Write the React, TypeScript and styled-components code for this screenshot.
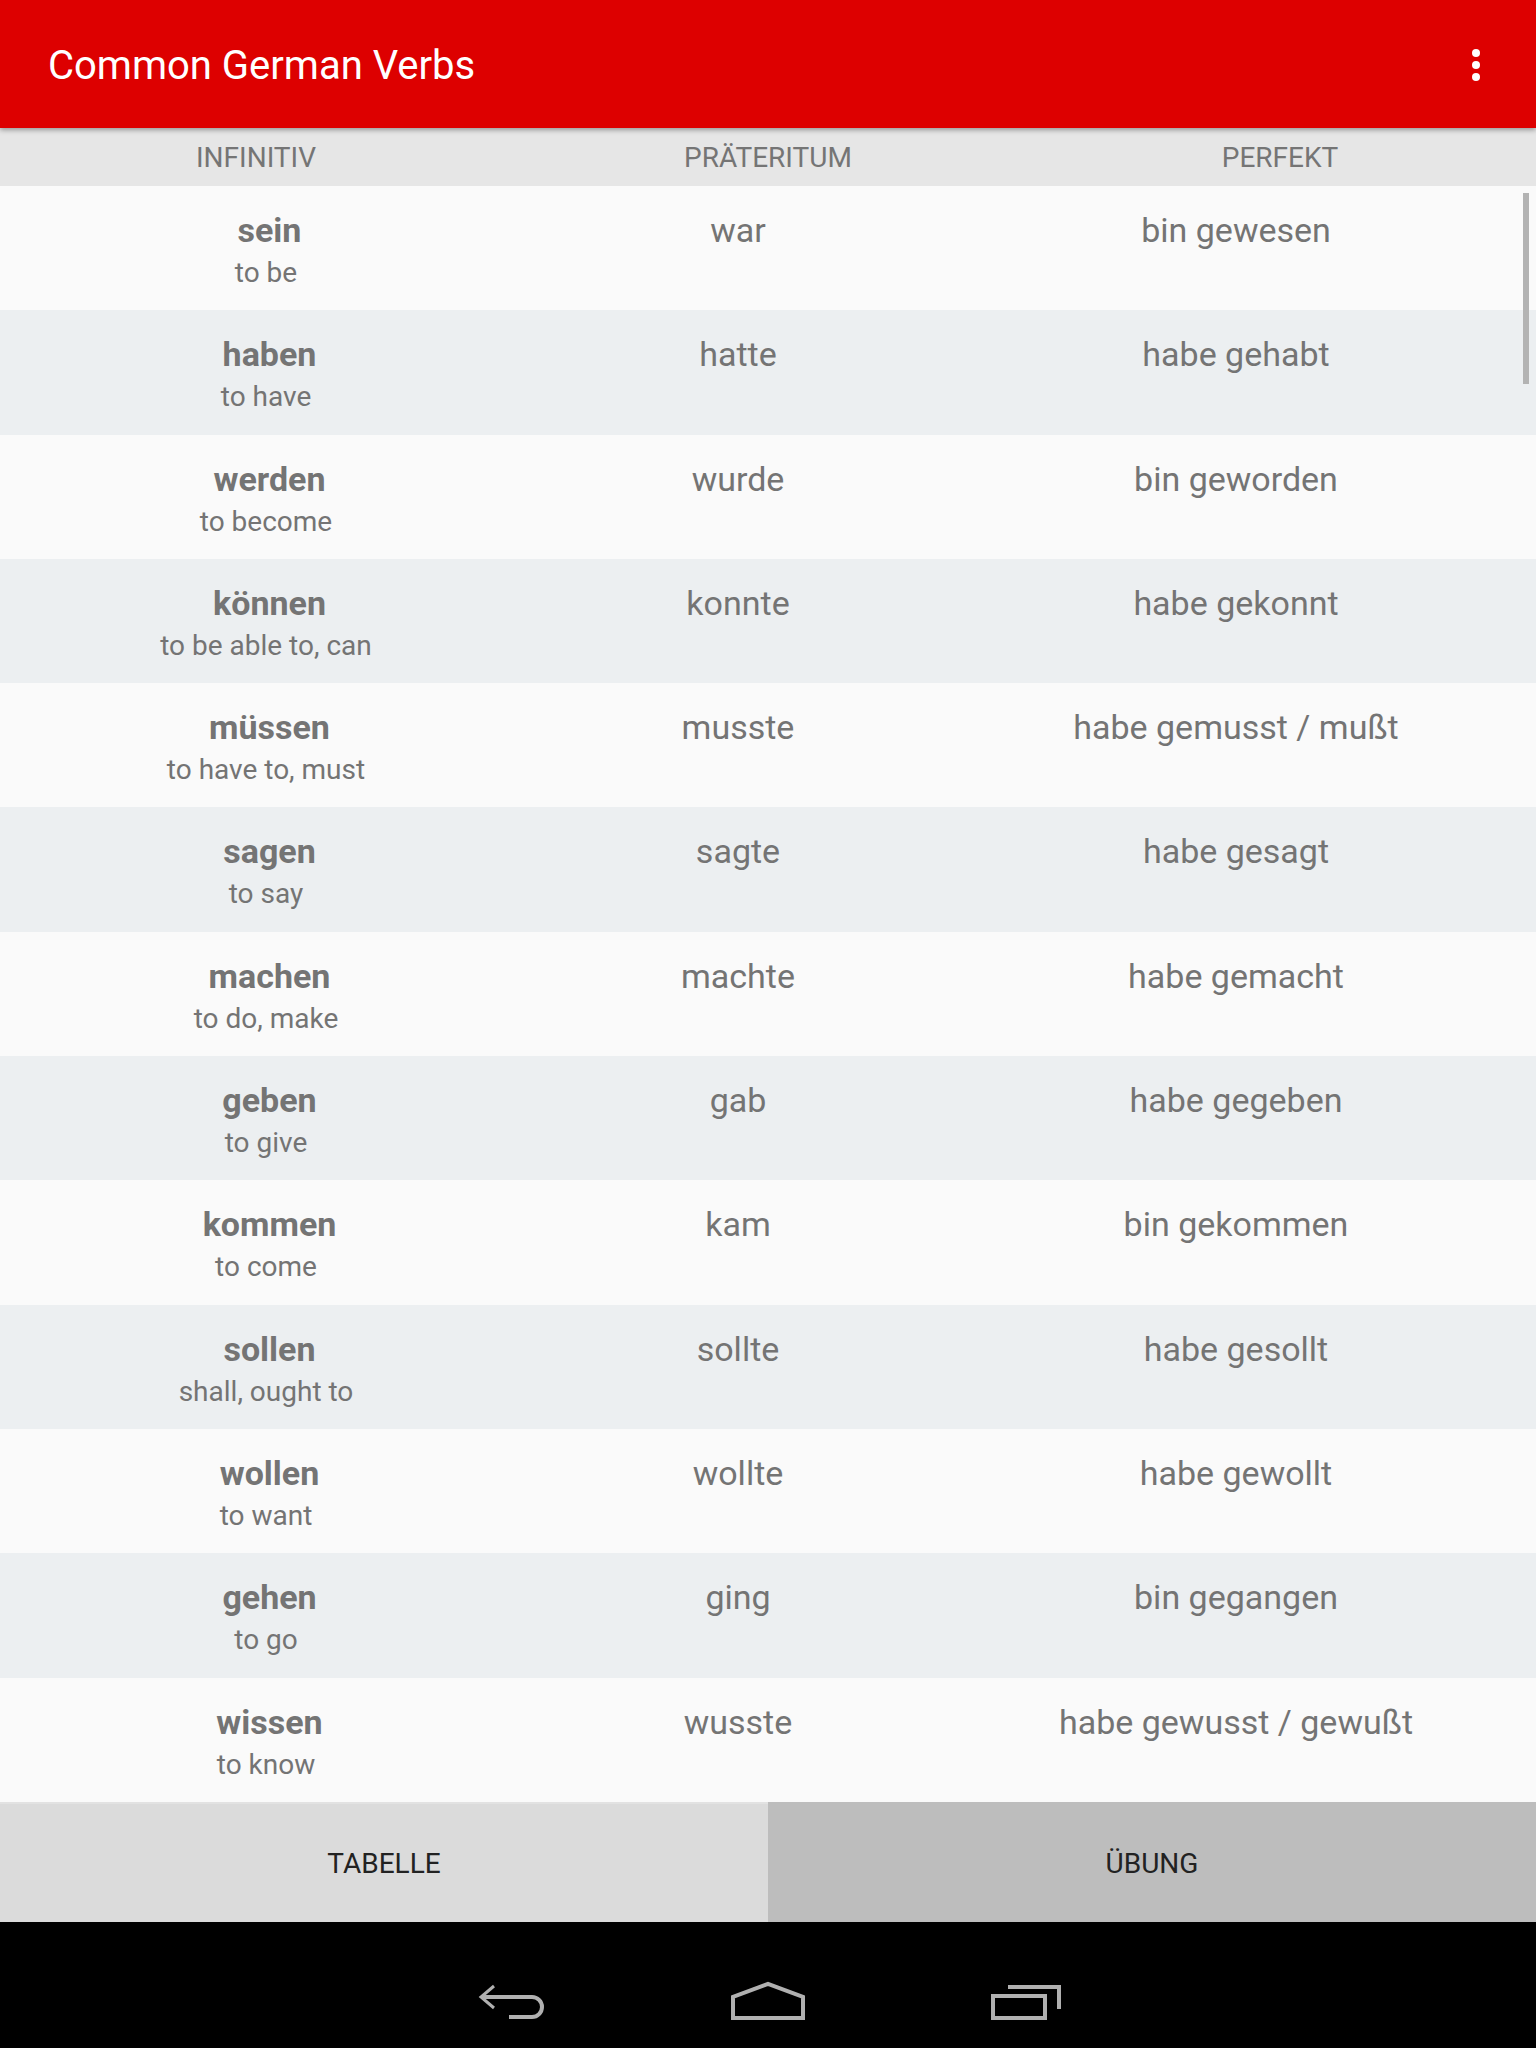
import React from 'react'
import styled, { createGlobalStyle } from 'styled-components'

const GlobalStyle = createGlobalStyle`
  html, body {
    margin: 0;
    padding: 0;
    background: #000;
  }
  body {
    font-family: Roboto, "Noto Sans", "Liberation Sans", sans-serif;
  }
`

type Verb = {
  inf: string
  meaning: string
  prat: string
  perf: string
}

const verbs: Verb[] = [
  { inf: 'sein', meaning: 'to be', prat: 'war', perf: 'bin gewesen' },
  { inf: 'haben', meaning: 'to have', prat: 'hatte', perf: 'habe gehabt' },
  { inf: 'werden', meaning: 'to become', prat: 'wurde', perf: 'bin geworden' },
  { inf: 'können', meaning: 'to be able to, can', prat: 'konnte', perf: 'habe gekonnt' },
  { inf: 'müssen', meaning: 'to have to, must', prat: 'musste', perf: 'habe gemusst / mußt' },
  { inf: 'sagen', meaning: 'to say', prat: 'sagte', perf: 'habe gesagt' },
  { inf: 'machen', meaning: 'to do, make', prat: 'machte', perf: 'habe gemacht' },
  { inf: 'geben', meaning: 'to give', prat: 'gab', perf: 'habe gegeben' },
  { inf: 'kommen', meaning: 'to come', prat: 'kam', perf: 'bin gekommen' },
  { inf: 'sollen', meaning: 'shall, ought to', prat: 'sollte', perf: 'habe gesollt' },
  { inf: 'wollen', meaning: 'to want', prat: 'wollte', perf: 'habe gewollt' },
  { inf: 'gehen', meaning: 'to go', prat: 'ging', perf: 'bin gegangen' },
  { inf: 'wissen', meaning: 'to know', prat: 'wusste', perf: 'habe gewusst / gewußt' },
]

const Screen = styled.div`
  width: 1536px;
  height: 2048px;
  display: flex;
  flex-direction: column;
  overflow: hidden;
  background: #fafafa;
`

const AppBar = styled.header`
  position: relative;
  z-index: 2;
  height: 128px;
  flex: none;
  display: flex;
  align-items: center;
  justify-content: space-between;
  padding: 3px 48px 0 48px;
  box-sizing: border-box;
  background: #dd0000;
  box-shadow: 0 2px 5px rgba(0, 0, 0, 0.35);
`

const Title = styled.h1`
  margin: 0;
  font-size: 40px;
  font-weight: 400;
  color: #fff;
`

const MenuButton = styled.div`
  width: 24px;
  height: 40px;
  display: flex;
  align-items: center;
  justify-content: center;
  margin-top: -2px;
`

const HeaderRow = styled.div`
  height: 58px;
  flex: none;
  display: grid;
  grid-template-columns: 1fr 1fr 1fr;
  align-items: center;
  background: #e6e6e6;
`

const HeaderCell = styled.div`
  text-align: center;
  font-size: 28px;
  color: #757575;
  text-transform: uppercase;
`

const List = styled.div`
  position: relative;
  flex: 1;
  overflow: hidden;
`

const Row = styled.div<{ $alt: boolean }>`
  height: 124.3px;
  box-sizing: border-box;
  padding-top: 23px;
  display: grid;
  grid-template-columns: 532px 412px 584px;
  background: ${(p) => (p.$alt ? '#eceff1' : '#fafafa')};
  color: #747474;
`

const Cell = styled.div`
  display: flex;
  flex-direction: column;
  align-items: center;
  text-align: center;
`

const Word = styled.span<{ $bold?: boolean }>`
  font-size: 34px;
  line-height: 42px;
  font-weight: ${(p) => (p.$bold ? 700 : 400)};
  padding-left: ${(p) => (p.$bold ? '7px' : '0')};
`

const Meaning = styled.span`
  font-size: 28px;
  line-height: 33px;
  margin-top: 5px;
`

const ScrollThumb = styled.div`
  position: absolute;
  top: 7px;
  right: 7px;
  width: 6px;
  height: 191px;
  background: #b3b3b3;
`

const Tabs = styled.div`
  height: 120px;
  flex: none;
  display: grid;
  grid-template-columns: 1fr 1fr;
`

const Tab = styled.div<{ $active: boolean }>`
  display: flex;
  align-items: center;
  justify-content: center;
  font-size: 28px;
  color: #222;
  text-transform: uppercase;
  background: ${(p) => (p.$active ? '#dbdbdb' : '#bdbdbd')};
  border-top: 2px solid ${(p) => (p.$active ? '#e2e2e2' : '#bdbdbd')};
  box-sizing: border-box;
`

const NavBar = styled.nav`
  height: 126px;
  flex: none;
  background: #000;
  display: flex;
  align-items: flex-start;
  justify-content: center;
  padding-top: 55px;
  box-sizing: border-box;
`

const NavSlot = styled.div`
  width: 256px;
  display: flex;
  justify-content: center;
`

const navStroke = {
  fill: 'none',
  stroke: '#b0b0b0',
  strokeWidth: 4,
}

const BackIcon = () => (
  <svg width="80" height="48" viewBox="0 0 80 48">
    <path d="M22 9 L9 20 L22 31" {...navStroke} strokeWidth={3} />
    <path d="M10 20 H60 A10 10 0 0 1 60 40 H37" {...navStroke} />
  </svg>
)

const HomeIcon = () => (
  <svg width="80" height="48" viewBox="0 0 80 48">
    <path d="M5 41 V20 L40 7 L75 20 V41 Z" {...navStroke} />
  </svg>
)

const RecentsIcon = () => (
  <svg width="80" height="48" viewBox="0 0 80 48">
    <path d="M24 10 H75 V32" {...navStroke} />
    <rect x="9" y="19" width="52" height="22" {...navStroke} />
  </svg>
)

const OverflowIcon = () => (
  <svg width="10" height="34" viewBox="0 0 10 34">
    <circle cx="5" cy="5" r="4" fill="#fff" />
    <circle cx="5" cy="17" r="4" fill="#fff" />
    <circle cx="5" cy="29" r="4" fill="#fff" />
  </svg>
)

const App: React.FC = () => {
  return (
    <>
      <GlobalStyle />
      <Screen>
        <AppBar>
          <Title>Common German Verbs</Title>
          <MenuButton>
            <OverflowIcon />
          </MenuButton>
        </AppBar>

        <HeaderRow>
          <HeaderCell>Infinitiv</HeaderCell>
          <HeaderCell>Präteritum</HeaderCell>
          <HeaderCell>Perfekt</HeaderCell>
        </HeaderRow>

        <List>
          {verbs.map((v, i) => (
            <Row key={v.inf} $alt={i % 2 === 1}>
              <Cell>
                <Word $bold>{v.inf}</Word>
                <Meaning>{v.meaning}</Meaning>
              </Cell>
              <Cell>
                <Word>{v.prat}</Word>
              </Cell>
              <Cell>
                <Word>{v.perf}</Word>
              </Cell>
            </Row>
          ))}
          <ScrollThumb />
        </List>

        <Tabs>
          <Tab $active>Tabelle</Tab>
          <Tab $active={false}>Übung</Tab>
        </Tabs>

        <NavBar>
          <NavSlot>
            <BackIcon />
          </NavSlot>
          <NavSlot>
            <HomeIcon />
          </NavSlot>
          <NavSlot>
            <RecentsIcon />
          </NavSlot>
        </NavBar>
      </Screen>
    </>
  )
}

export default App
